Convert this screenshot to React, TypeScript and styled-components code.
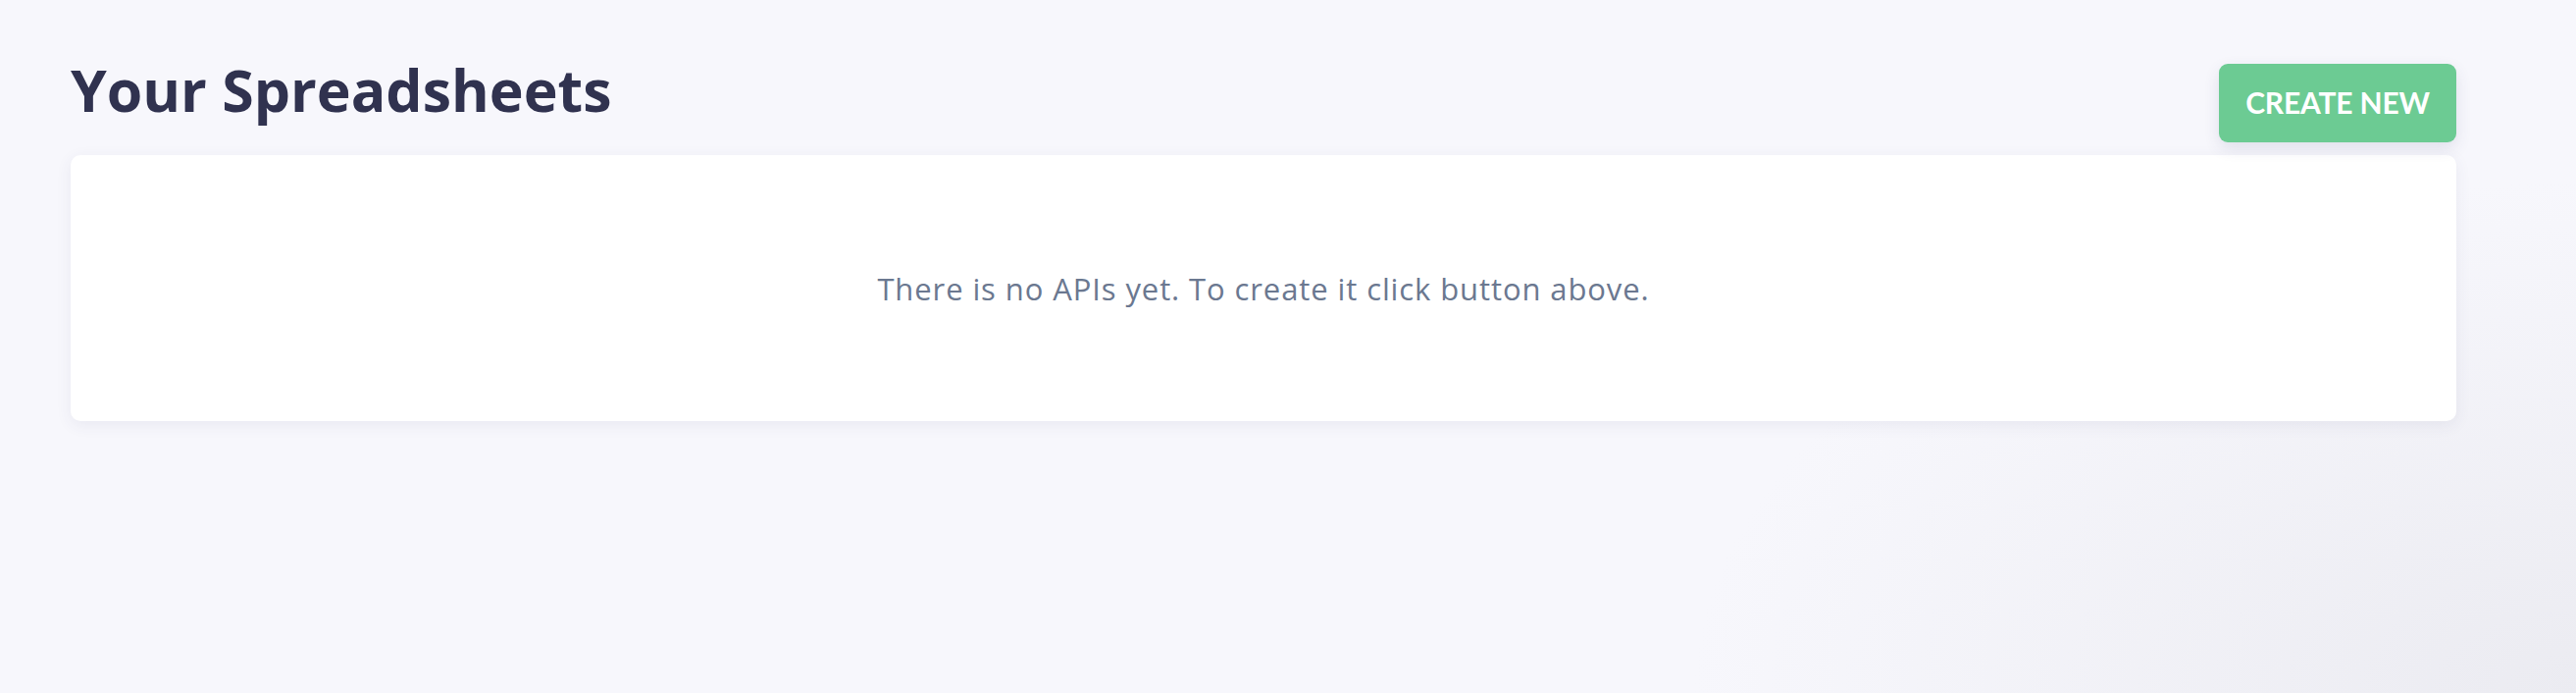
import styled, { createGlobalStyle } from 'styled-components';

const GlobalStyle = createGlobalStyle`
    html, body {
        margin: 0;
        padding: 0;
    }

    body {
        font-family: "Open Sans", Lato, sans-serif;
        background: #f7f7fc;
    }
`

const Page = styled.div`
    min-height: 100vh;
    box-sizing: border-box;
    padding: 55px 122px 0 72px;
    background:
        radial-gradient(ellipse 900px 520px at 100% 100%, #ebebf1 0%, rgba(235,235,241,0) 100%),
        #f7f7fc;
`

const Header = styled.div`
    display: flex;
    justify-content: space-between;
    align-items: flex-start;
`

const Title = styled.h1`
    margin: 0;
    font-size: 59px;
    line-height: 72px;
    font-weight: 700;
    color: #30324f;
`

const CreateButton = styled.button`
    margin-top: 10px;
    width: 242px;
    height: 80px;
    padding: 0 0 3px;
    border: none;
    border-radius: 9px;
    background-color: #6ccb93;
    color: #ffffff;
    font-family: Lato, "Open Sans", sans-serif;
    font-size: 30px;
    font-weight: 700;
    letter-spacing: -0.2px;
    box-shadow: 0 6px 16px 0 rgba(60, 60, 110, 0.12);
    cursor: pointer;
`

const EmptyCard = styled.div`
    margin-top: 13px;
    height: 271px;
    display: flex;
    align-items: center;
    justify-content: center;
    background-color: #ffffff;
    border-radius: 10px;
    box-shadow: 0 4px 16px 0 rgba(60, 60, 110, 0.08);
`

const EmptyText = styled.p`
    margin: 0;
    font-size: 31px;
    letter-spacing: 0.9px;
    color: #6b7890;
`

export default function App() {
    return (
        <>
            <GlobalStyle />
            <Page>
                <Header>
                    <Title>Your Spreadsheets</Title>
                    <CreateButton>CREATE NEW</CreateButton>
                </Header>

                <EmptyCard>
                    <EmptyText>There is no APIs yet. To create it click button above.</EmptyText>
                </EmptyCard>
            </Page>
        </>
    )
}
